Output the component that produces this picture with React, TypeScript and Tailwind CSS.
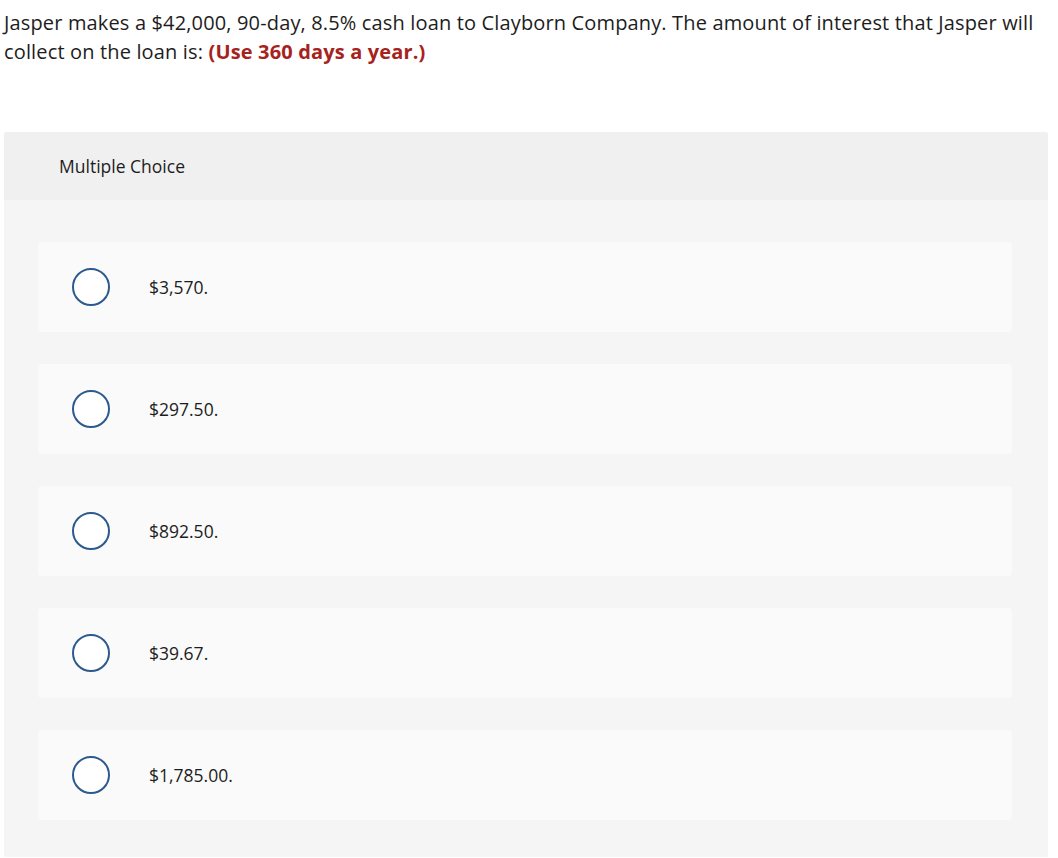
const choices = ['$3,570.', '$297.50.', '$892.50.', '$39.67.', '$1,785.00.'];

export default function App() {
  return (
    <div className="w-[1058px] h-[858px] bg-white text-[#1d1d1d] font-['Open_Sans','Liberation_Sans',sans-serif]">
      <p className="pl-1 pt-[8px] text-[20px] leading-[29px] tracking-[0.15px] whitespace-nowrap">
        Jasper makes a $42,000, 90-day, 8.5% cash loan to Clayborn Company. The amount of interest that Jasper will
        <br />
        collect on the loan is: <span className="font-bold text-[#a6231d]">(Use 360 days a year.)</span>
      </p>

      <div className="mt-[66px] ml-1 w-[1044px] rounded-[2px] overflow-hidden">
        <div className="h-[68px] bg-[#f0f0f0] pl-[55px] flex items-center text-[17.5px]">Multiple Choice</div>
        <div className="bg-[#f5f5f5] pl-[34px] pr-[36px] pt-[42px] pb-[37px] flex flex-col gap-[32px]">
          {choices.map((c) => (
            <label key={c} className="h-[90px] bg-[#fafafa] rounded-[4px] flex items-center pl-[34px] cursor-pointer">
              <span className="w-[38px] h-[38px] rounded-full border-2 border-[#2d5a8e] bg-white shrink-0" />
              <span className="ml-[39px] text-[17.5px]">{c}</span>
            </label>
          ))}
        </div>
      </div>
    </div>
  );
}
